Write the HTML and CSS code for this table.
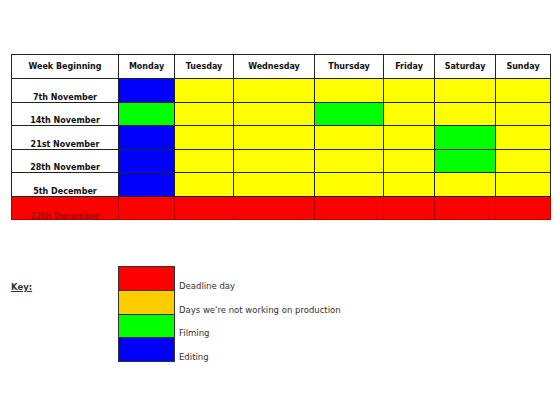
FILE: index.html
```html
<!DOCTYPE html>
<html>

<head>
  <title>Production Schedule</title>
  <link rel="stylesheet" href="styles.css">
</head>

<body>
  <div class="page">
    <table class="schedule">
      <colgroup>
        <col style="width: 107px">
        <col style="width: 56px">
        <col style="width: 59px">
        <col style="width: 81px">
        <col style="width: 69px">
        <col style="width: 51px">
        <col style="width: 61px">
        <col style="width: 55px">
      </colgroup>
      <thead>
        <tr>
          <th>Week Beginning</th>
          <th>Monday</th>
          <th>Tuesday</th>
          <th>Wednesday</th>
          <th>Thursday</th>
          <th>Friday</th>
          <th>Saturday</th>
          <th>Sunday</th>
        </tr>
      </thead>
      <tbody>
        <tr>
          <td class="week">7th November</td>
          <td class="edit"></td><td class="off"></td><td class="off"></td><td class="off"></td><td class="off"></td><td class="off"></td><td class="off"></td>
        </tr>
        <tr>
          <td class="week">14th November</td>
          <td class="film"></td><td class="off"></td><td class="off"></td><td class="film"></td><td class="off"></td><td class="off"></td><td class="off"></td>
        </tr>
        <tr>
          <td class="week">21st November</td>
          <td class="edit"></td><td class="off"></td><td class="off"></td><td class="off"></td><td class="off"></td><td class="film"></td><td class="off"></td>
        </tr>
        <tr>
          <td class="week">28th November</td>
          <td class="edit"></td><td class="off"></td><td class="off"></td><td class="off"></td><td class="off"></td><td class="film"></td><td class="off"></td>
        </tr>
        <tr>
          <td class="week">5th December</td>
          <td class="edit"></td><td class="off"></td><td class="off"></td><td class="off"></td><td class="off"></td><td class="off"></td><td class="off"></td>
        </tr>
        <tr class="deadline-row">
          <td class="week">12th December</td>
          <td></td><td></td><td></td><td></td><td></td><td></td><td></td>
        </tr>
      </tbody>
    </table>

    <div class="key">
      <div class="key-title">Key:</div>
      <ul class="key-list">
        <li><span class="swatch deadline"></span><span class="key-label">Deadline day</span></li>
        <li><span class="swatch not-working"></span><span class="key-label">Days we're not working on production</span></li>
        <li><span class="swatch filming"></span><span class="key-label">Filming</span></li>
        <li><span class="swatch editing"></span><span class="key-label">Editing</span></li>
      </ul>
    </div>
  </div>
</body>

</html>
```

FILE: styles.css
```css
body {
  font-family: "DejaVu Sans", Verdana, sans-serif;
  margin: 0;
  padding: 0;
  background-color: #fff;
  color: #000;
}

.page {
  padding: 54px 0 0 11px;
}

.schedule {
  border-collapse: collapse;
  table-layout: fixed;
  width: 539px;
  font-size: 8px;
  font-weight: bold;
}

.schedule th,
.schedule td {
  border: 1px solid #222;
  padding: 0;
  text-align: center;
  color: #111;
}

.schedule th {
  height: 23px;
  vertical-align: middle;
}

.schedule td {
  height: 22.5px;
  vertical-align: bottom;
  line-height: 9px;
}

.schedule .edit {
  background-color: #0000ff;
}

.schedule .film {
  background-color: #00ff00;
}

.schedule .off {
  background-color: #ffff00;
}

.deadline-row td {
  background-color: #ff0000;
  border-color: #b00000;
}

.deadline-row .week {
  color: #a80000;
  line-height: 5px;
  overflow: hidden;
}

.key {
  display: flex;
  margin-top: 46px;
  font-size: 8.5px;
}

.key-title {
  width: 107px;
  padding-top: 16px;
  font-weight: bold;
  text-decoration: underline;
  color: #333;
}

.key-list {
  list-style-type: none;
  margin: 0;
  padding: 0;
}

.key-list li {
  display: flex;
  align-items: flex-end;
}

.swatch {
  display: block;
  width: 55px;
  height: 22.75px;
  border: 1px solid #333;
  border-top: none;
}

.key-list li:first-child .swatch {
  border-top: 1px solid #333;
}

.key-label {
  margin-left: 4px;
  color: #333;
  line-height: 9px;
  padding-bottom: 0;
}

.deadline {
  background-color: #ff0000;
}

.not-working {
  background-color: #ffcc00;
}

.filming {
  background-color: #00ff00;
}

.editing {
  background-color: #0000ff;
}
```
